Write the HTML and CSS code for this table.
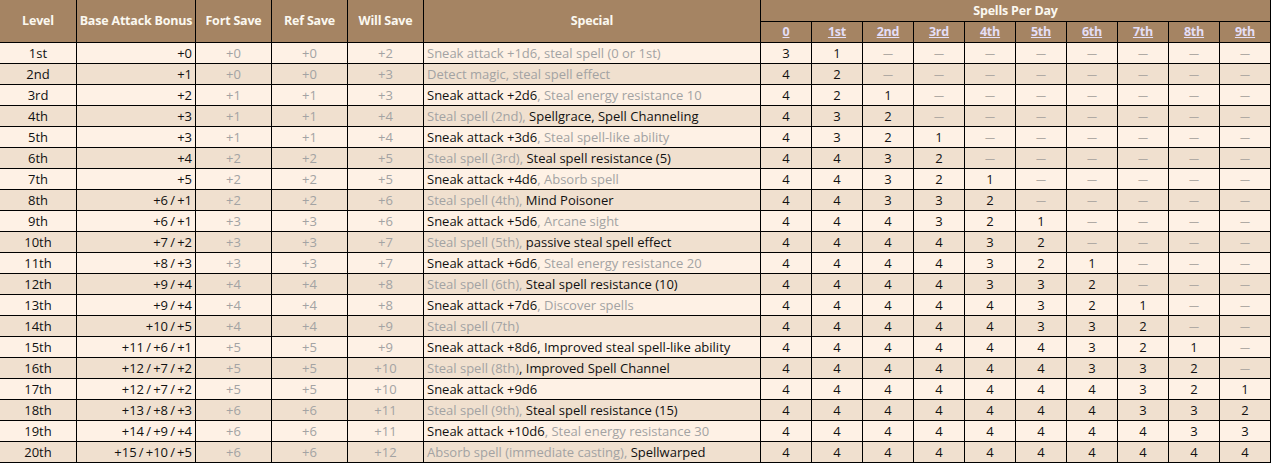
FILE: index.html
```html
<!DOCTYPE html>
<html>
<head>
<meta charset="utf-8">
<title>Spellthief</title>
<link rel="stylesheet" href="styles.css">
</head>
<body>
<table class="prog">
<colgroup>
<col class="c-lvl"><col class="c-bab"><col class="c-sv"><col class="c-sv"><col class="c-sv"><col class="c-sp">
<col class="c-n"><col class="c-n"><col class="c-n"><col class="c-n"><col class="c-n"><col class="c-n"><col class="c-n"><col class="c-n"><col class="c-n"><col class="c-n">
</colgroup>
<thead>
<tr class="h1">
<th rowspan="2">Level</th><th rowspan="2">Base Attack Bonus</th><th rowspan="2">Fort Save</th><th rowspan="2">Ref Save</th><th rowspan="2">Will Save</th><th rowspan="2">Special</th><th colspan="10">Spells Per Day</th>
</tr>
<tr class="h2">
<th><a href="#">0</a></th><th><a href="#">1st</a></th><th><a href="#">2nd</a></th><th><a href="#">3rd</a></th><th><a href="#">4th</a></th><th><a href="#">5th</a></th><th><a href="#">6th</a></th><th><a href="#">7th</a></th><th><a href="#">8th</a></th><th><a href="#">9th</a></th>
</tr>
</thead>
<tbody>
<tr><td class="lvl">1st</td><td class="bab">+0</td><td class="sv">+0</td><td class="sv">+0</td><td class="sv">+2</td><td class="sp"><span class="g">Sneak attack +1d6, steal spell (0 or 1st)</span></td><td class="n">3</td><td class="n">1</td><td class="d">—</td><td class="d">—</td><td class="d">—</td><td class="d">—</td><td class="d">—</td><td class="d">—</td><td class="d">—</td><td class="d">—</td></tr>
<tr><td class="lvl">2nd</td><td class="bab">+1</td><td class="sv">+0</td><td class="sv">+0</td><td class="sv">+3</td><td class="sp"><span class="g">Detect magic, steal spell effect</span></td><td class="n">4</td><td class="n">2</td><td class="d">—</td><td class="d">—</td><td class="d">—</td><td class="d">—</td><td class="d">—</td><td class="d">—</td><td class="d">—</td><td class="d">—</td></tr>
<tr><td class="lvl">3rd</td><td class="bab">+2</td><td class="sv">+1</td><td class="sv">+1</td><td class="sv">+3</td><td class="sp">Sneak attack +2d6<span class="g">, Steal energy resistance 10</span></td><td class="n">4</td><td class="n">2</td><td class="n">1</td><td class="d">—</td><td class="d">—</td><td class="d">—</td><td class="d">—</td><td class="d">—</td><td class="d">—</td><td class="d">—</td></tr>
<tr><td class="lvl">4th</td><td class="bab">+3</td><td class="sv">+1</td><td class="sv">+1</td><td class="sv">+4</td><td class="sp"><span class="g">Steal spell (2nd), </span>Spellgrace, Spell Channeling</td><td class="n">4</td><td class="n">3</td><td class="n">2</td><td class="d">—</td><td class="d">—</td><td class="d">—</td><td class="d">—</td><td class="d">—</td><td class="d">—</td><td class="d">—</td></tr>
<tr><td class="lvl">5th</td><td class="bab">+3</td><td class="sv">+1</td><td class="sv">+1</td><td class="sv">+4</td><td class="sp">Sneak attack +3d6<span class="g">, Steal spell-like ability</span></td><td class="n">4</td><td class="n">3</td><td class="n">2</td><td class="n">1</td><td class="d">—</td><td class="d">—</td><td class="d">—</td><td class="d">—</td><td class="d">—</td><td class="d">—</td></tr>
<tr><td class="lvl">6th</td><td class="bab">+4</td><td class="sv">+2</td><td class="sv">+2</td><td class="sv">+5</td><td class="sp"><span class="g">Steal spell (3rd), </span>Steal spell resistance (5)</td><td class="n">4</td><td class="n">4</td><td class="n">3</td><td class="n">2</td><td class="d">—</td><td class="d">—</td><td class="d">—</td><td class="d">—</td><td class="d">—</td><td class="d">—</td></tr>
<tr><td class="lvl">7th</td><td class="bab">+5</td><td class="sv">+2</td><td class="sv">+2</td><td class="sv">+5</td><td class="sp">Sneak attack +4d6<span class="g">, Absorb spell</span></td><td class="n">4</td><td class="n">4</td><td class="n">3</td><td class="n">2</td><td class="n">1</td><td class="d">—</td><td class="d">—</td><td class="d">—</td><td class="d">—</td><td class="d">—</td></tr>
<tr><td class="lvl">8th</td><td class="bab">+6 / +1</td><td class="sv">+2</td><td class="sv">+2</td><td class="sv">+6</td><td class="sp"><span class="g">Steal spell (4th), </span>Mind Poisoner</td><td class="n">4</td><td class="n">4</td><td class="n">3</td><td class="n">3</td><td class="n">2</td><td class="d">—</td><td class="d">—</td><td class="d">—</td><td class="d">—</td><td class="d">—</td></tr>
<tr><td class="lvl">9th</td><td class="bab">+6 / +1</td><td class="sv">+3</td><td class="sv">+3</td><td class="sv">+6</td><td class="sp">Sneak attack +5d6<span class="g">, Arcane sight</span></td><td class="n">4</td><td class="n">4</td><td class="n">4</td><td class="n">3</td><td class="n">2</td><td class="n">1</td><td class="d">—</td><td class="d">—</td><td class="d">—</td><td class="d">—</td></tr>
<tr><td class="lvl">10th</td><td class="bab">+7 / +2</td><td class="sv">+3</td><td class="sv">+3</td><td class="sv">+7</td><td class="sp"><span class="g">Steal spell (5th), </span>passive steal spell effect</td><td class="n">4</td><td class="n">4</td><td class="n">4</td><td class="n">4</td><td class="n">3</td><td class="n">2</td><td class="d">—</td><td class="d">—</td><td class="d">—</td><td class="d">—</td></tr>
<tr><td class="lvl">11th</td><td class="bab">+8 / +3</td><td class="sv">+3</td><td class="sv">+3</td><td class="sv">+7</td><td class="sp">Sneak attack +6d6<span class="g">, Steal energy resistance 20</span></td><td class="n">4</td><td class="n">4</td><td class="n">4</td><td class="n">4</td><td class="n">3</td><td class="n">2</td><td class="n">1</td><td class="d">—</td><td class="d">—</td><td class="d">—</td></tr>
<tr><td class="lvl">12th</td><td class="bab">+9 / +4</td><td class="sv">+4</td><td class="sv">+4</td><td class="sv">+8</td><td class="sp"><span class="g">Steal spell (6th), </span>Steal spell resistance (10)</td><td class="n">4</td><td class="n">4</td><td class="n">4</td><td class="n">4</td><td class="n">3</td><td class="n">3</td><td class="n">2</td><td class="d">—</td><td class="d">—</td><td class="d">—</td></tr>
<tr><td class="lvl">13th</td><td class="bab">+9 / +4</td><td class="sv">+4</td><td class="sv">+4</td><td class="sv">+8</td><td class="sp">Sneak attack +7d6<span class="g">, Discover spells</span></td><td class="n">4</td><td class="n">4</td><td class="n">4</td><td class="n">4</td><td class="n">4</td><td class="n">3</td><td class="n">2</td><td class="n">1</td><td class="d">—</td><td class="d">—</td></tr>
<tr><td class="lvl">14th</td><td class="bab">+10 / +5</td><td class="sv">+4</td><td class="sv">+4</td><td class="sv">+9</td><td class="sp"><span class="g">Steal spell (7th)</span></td><td class="n">4</td><td class="n">4</td><td class="n">4</td><td class="n">4</td><td class="n">4</td><td class="n">3</td><td class="n">3</td><td class="n">2</td><td class="d">—</td><td class="d">—</td></tr>
<tr><td class="lvl">15th</td><td class="bab">+11 / +6 / +1</td><td class="sv">+5</td><td class="sv">+5</td><td class="sv">+9</td><td class="sp">Sneak attack +8d6, Improved steal spell-like ability</td><td class="n">4</td><td class="n">4</td><td class="n">4</td><td class="n">4</td><td class="n">4</td><td class="n">4</td><td class="n">3</td><td class="n">2</td><td class="n">1</td><td class="d">—</td></tr>
<tr><td class="lvl">16th</td><td class="bab">+12 / +7 / +2</td><td class="sv">+5</td><td class="sv">+5</td><td class="sv">+10</td><td class="sp"><span class="g">Steal spell (8th)</span>, Improved Spell Channel</td><td class="n">4</td><td class="n">4</td><td class="n">4</td><td class="n">4</td><td class="n">4</td><td class="n">4</td><td class="n">3</td><td class="n">3</td><td class="n">2</td><td class="d">—</td></tr>
<tr><td class="lvl">17th</td><td class="bab">+12 / +7 / +2</td><td class="sv">+5</td><td class="sv">+5</td><td class="sv">+10</td><td class="sp">Sneak attack +9d6</td><td class="n">4</td><td class="n">4</td><td class="n">4</td><td class="n">4</td><td class="n">4</td><td class="n">4</td><td class="n">4</td><td class="n">3</td><td class="n">2</td><td class="n">1</td></tr>
<tr><td class="lvl">18th</td><td class="bab">+13 / +8 / +3</td><td class="sv">+6</td><td class="sv">+6</td><td class="sv">+11</td><td class="sp"><span class="g">Steal spell (9th), </span>Steal spell resistance (15)</td><td class="n">4</td><td class="n">4</td><td class="n">4</td><td class="n">4</td><td class="n">4</td><td class="n">4</td><td class="n">4</td><td class="n">3</td><td class="n">3</td><td class="n">2</td></tr>
<tr><td class="lvl">19th</td><td class="bab">+14 / +9 / +4</td><td class="sv">+6</td><td class="sv">+6</td><td class="sv">+11</td><td class="sp">Sneak attack +10d6<span class="g">, Steal energy resistance 30</span></td><td class="n">4</td><td class="n">4</td><td class="n">4</td><td class="n">4</td><td class="n">4</td><td class="n">4</td><td class="n">4</td><td class="n">4</td><td class="n">3</td><td class="n">3</td></tr>
<tr><td class="lvl">20th</td><td class="bab">+15 / +10 / +5</td><td class="sv">+6</td><td class="sv">+6</td><td class="sv">+12</td><td class="sp"><span class="g">Absorb spell (immediate casting), </span>Spellwarped</td><td class="n">4</td><td class="n">4</td><td class="n">4</td><td class="n">4</td><td class="n">4</td><td class="n">4</td><td class="n">4</td><td class="n">4</td><td class="n">4</td><td class="n">4</td></tr>
</tbody>
</table>
</body>
</html>
```
FILE: styles.css
```css
html, body {
  margin: 0;
  padding: 0;
  background: #ffffff;
}

.prog {
  border-collapse: collapse;
  table-layout: fixed;
  width: 1272px;
  margin: -1px 0 0 -1px;
  font-family: "Open Sans", "Liberation Sans", Arial, sans-serif;
  font-size: 13px;
  color: #111111;
}

.c-lvl { width: 77px; }
.c-bab { width: 119px; }
.c-sv { width: 76px; }
.c-sp { width: 337px; }
.c-n { width: 51px; }

.prog th,
.prog td {
  border: 1px solid #000000;
  padding: 0 3px;
  white-space: nowrap;
  overflow: hidden;
  line-height: 16px;
}

.prog th {
  background: #a58463;
  color: #fbf8f0;
  font-weight: bold;
  font-size: 12.5px;
  text-align: center;
  padding: 0 2px;
  letter-spacing: -0.2px;
}

.prog .h1 { height: 22px; }
.prog .h2 { height: 21px; }

.prog th a {
  color: #e4def6;
  text-decoration: underline;
}

.prog tbody tr { height: 21px; }
.prog tbody tr:nth-child(odd) td { background: #fef1e5; }
.prog tbody tr:nth-child(even) td { background: #f0e0cf; }

.prog .lvl { text-align: center; }
.prog .bab { text-align: right; word-spacing: -1.2px; }
.prog .sv { text-align: center; color: #a3a3a3; }
.prog .sp { text-align: left; padding-left: 3px; }
.prog .n { text-align: center; }
.prog .d { text-align: center; color: #b0aaa4; font-size: 10px; }

.g { color: #a3a3a3; }
```
